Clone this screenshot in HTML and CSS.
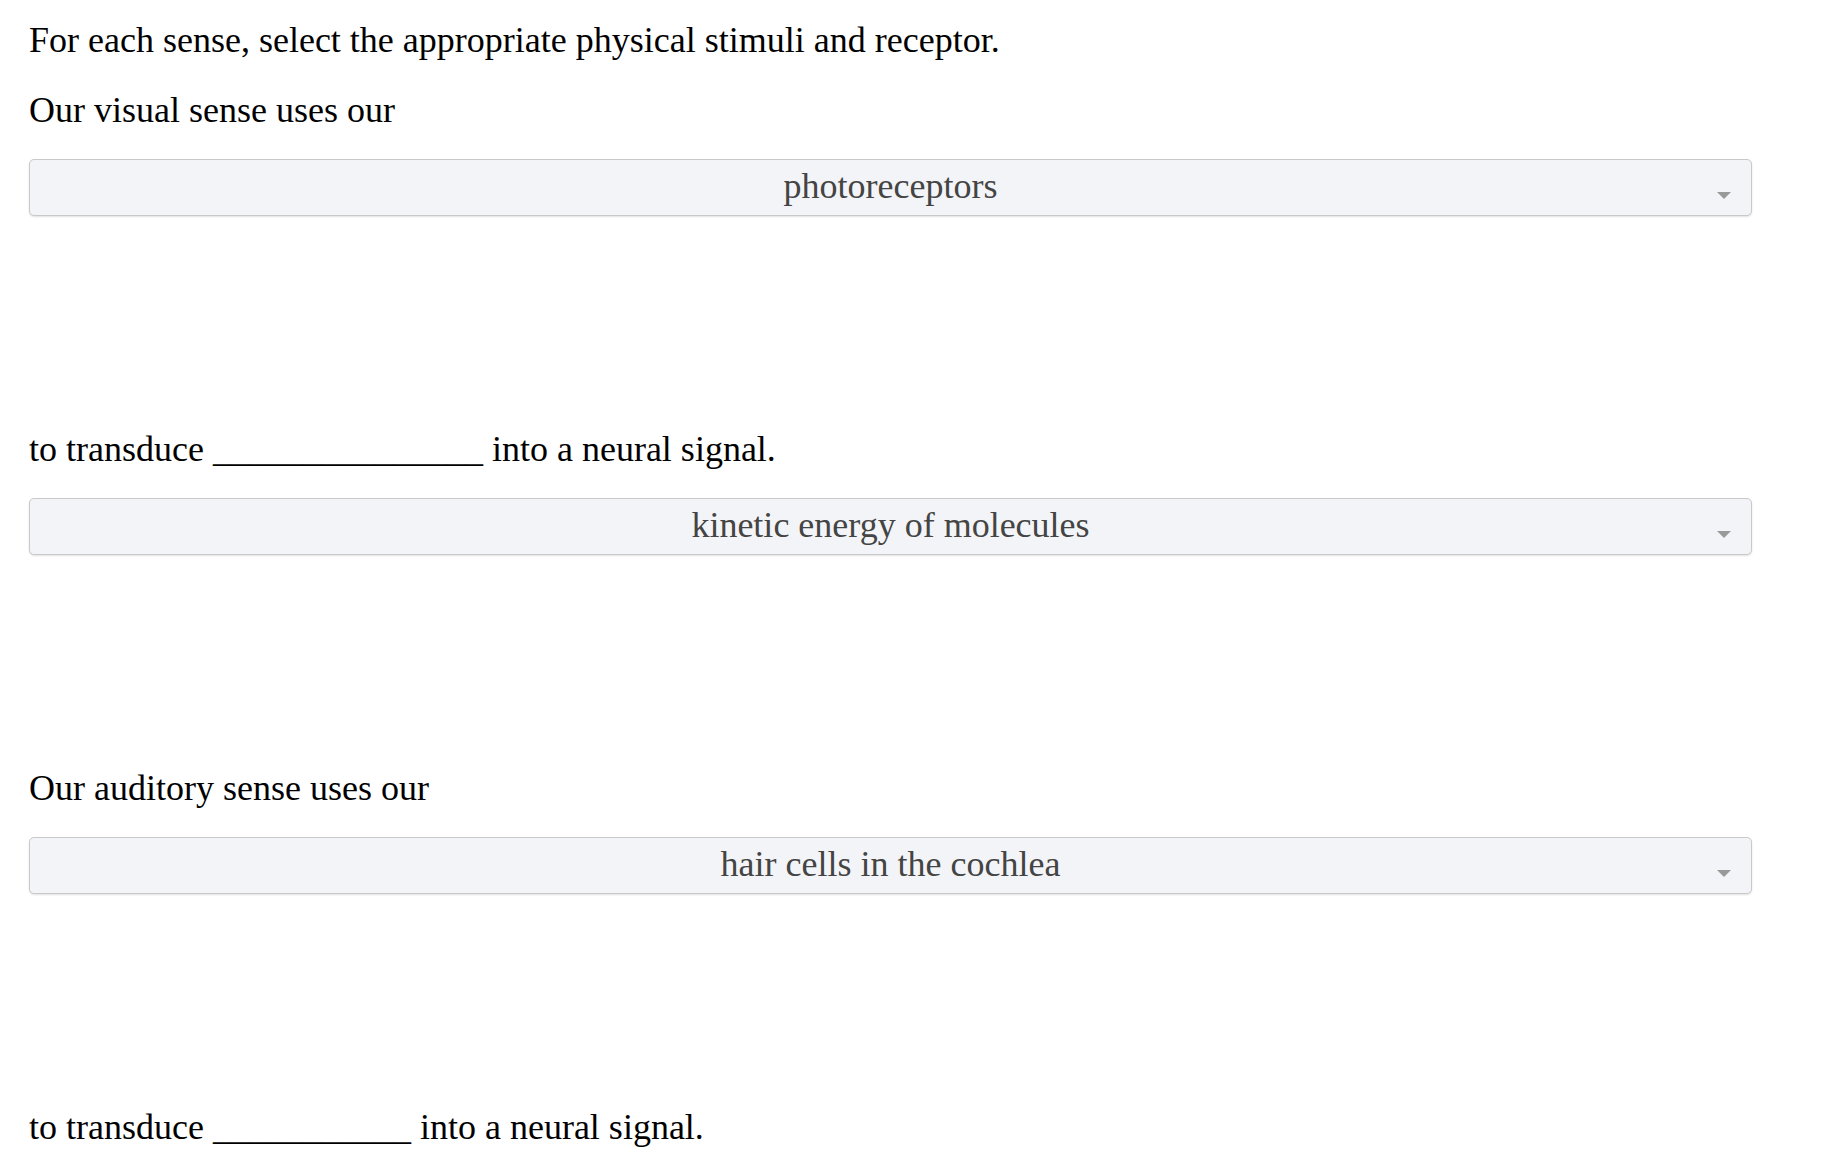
FILE: index.html
```html
<!DOCTYPE html>
<html lang="en">
<head>
<meta charset="utf-8">
<title>Senses</title>
<link rel="stylesheet" href="styles.css">
</head>
<body>
<main class="page">
  <p class="line">For each sense, select the appropriate physical stimuli and receptor.</p>
  <p class="line">Our visual sense uses our</p>
  <div class="dropdown"><span class="dropdown-value">photoreceptors</span><span class="caret"></span></div>
  <p class="line">to transduce _______________ into a neural signal.</p>
  <div class="dropdown"><span class="dropdown-value">kinetic energy of molecules</span><span class="caret"></span></div>
  <p class="line">Our auditory sense uses our</p>
  <div class="dropdown"><span class="dropdown-value">hair cells in the cochlea</span><span class="caret"></span></div>
  <p class="line">to transduce ___________ into a neural signal.</p>
</main>
</body>
</html>
```

FILE: styles.css
```css
html, body {
  margin: 0;
  padding: 0;
  background: #ffffff;
}

.page {
  padding: 20px 0 0 29px;
  font-family: "Liberation Serif", "Times New Roman", serif;
  font-size: 36px;
  line-height: 41px;
  color: #000000;
}

.line {
  margin: 0 0 29px 0;
  white-space: pre;
}

.line + .dropdown {
  margin-top: -1px;
}

.dropdown {
  position: relative;
  box-sizing: border-box;
  width: 1723px;
  height: 57px;
  margin: 0 0 213px 0;
  padding: 6px 40px 0 40px;
  background: #f3f4f7;
  border: 1px solid #c9c9c9;
  border-radius: 5px;
  box-shadow: 0 1px 2px rgba(0, 0, 0, 0.12);
  text-align: center;
  color: #444444;
}

.dropdown-value {
  display: inline-block;
}

.caret {
  position: absolute;
  top: 32px;
  right: 20px;
  width: 0;
  height: 0;
  border-left: 7px solid transparent;
  border-right: 7px solid transparent;
  border-top: 7px solid #999999;
}
```
